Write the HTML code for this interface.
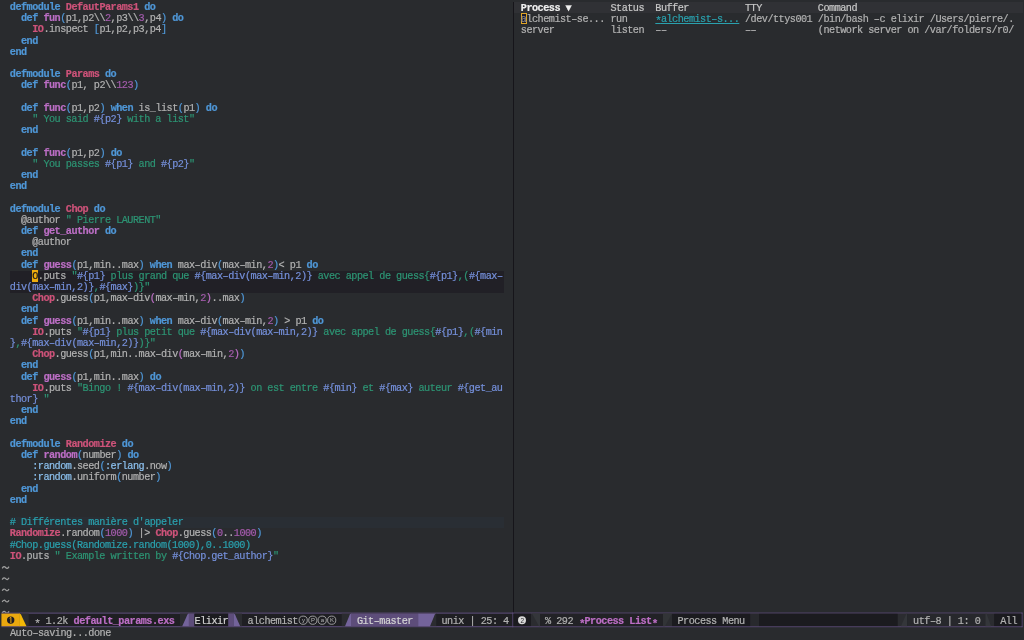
<!DOCTYPE html>
<html><head><meta charset="utf-8"><style>
*{margin:0;padding:0;box-sizing:border-box}
html,body{width:1024px;height:640px;overflow:hidden;background:#292b2e}
body{position:relative;-webkit-text-stroke:0.2px;font-family:"Liberation Mono",monospace;font-size:10.2px;letter-spacing:-0.5160px;color:#b2b2b2}
.ln,.rt,.mt,.tl{position:absolute;white-space:pre;line-height:11.2px;height:11.2px}
.ln{left:9.8px;width:494.2px}
.hl{background:#212026}
.cbg{background:#292e34}
.k{color:#4f97d7;font-weight:bold}.t{color:#ce537a;font-weight:bold}.f{color:#bc6ec5;font-weight:bold}.s{color:#2d9574}.c{color:#a45bad}.v{color:#7590db}.m{color:#2aa1ae}.a{color:#8cc0ee}.p{color:#4f97d7}.q{color:#bc6ec5}
.u{color:#1a1a1a}
.tl{left:2px;color:#9a9a9a}
.hb{color:#f0f0f0;font-weight:bold}
.hn{color:#c8c8c8}
.lnk{color:#2aa1ae;text-decoration:underline}
.mb{color:#bc6ec5;font-weight:bold}
.mw{color:#d4d4d4}
.abs{position:absolute}
.ast{position:relative;top:2.8px;font-size:11px;letter-spacing:-0.996px}
#w{position:absolute;left:0;top:0;width:1024px;height:640px;will-change:transform}
</style></head><body><div id="w">
<div class="abs" style="left:513px;top:1.9px;width:1px;height:611px;background:#16151a"></div>
<div class="abs" style="left:514px;top:2px;width:508.5px;height:10.6px;background:#303135"></div>
<div class="ln hl" style="top:270.70px"></div>
<div class="ln hl" style="top:281.90px"></div>
<div class="ln cbg" style="top:517.10px"></div>
<div class="abs" style="left:31.8px;top:269.9px;width:6.2px;height:12px;background:#eead0e"></div>
<div class="ln" style="top:1.90px"><span class="k">defmodule</span> <span class="t">DefautParams1</span> <span class="k">do</span></div>
<div class="ln" style="top:13.10px">  <span class="k">def</span> <span class="f">fun</span><span class="p">(</span>p1,p2\\<span class="c">2</span>,p3\\<span class="c">3</span>,p4<span class="p">)</span> <span class="k">do</span></div>
<div class="ln" style="top:24.30px">    <span class="t">IO</span>.inspect <span class="p">[</span>p1,p2,p3,p4<span class="p">]</span></div>
<div class="ln" style="top:35.50px">  <span class="k">end</span></div>
<div class="ln" style="top:46.70px"><span class="k">end</span></div>
<div class="ln" style="top:57.90px"></div>
<div class="ln" style="top:69.10px"><span class="k">defmodule</span> <span class="t">Params</span> <span class="k">do</span></div>
<div class="ln" style="top:80.30px">  <span class="k">def</span> <span class="f">func</span><span class="p">(</span>p1, p2\\<span class="c">123</span><span class="p">)</span></div>
<div class="ln" style="top:91.50px"></div>
<div class="ln" style="top:102.70px">  <span class="k">def</span> <span class="f">func</span><span class="p">(</span>p1,p2<span class="p">)</span> <span class="k">when</span> is_list<span class="p">(</span>p1<span class="p">)</span> <span class="k">do</span></div>
<div class="ln" style="top:113.90px">    <span class="s">&quot; You said </span><span class="v">#{p2}</span><span class="s"> with a list&quot;</span></div>
<div class="ln" style="top:125.10px">  <span class="k">end</span></div>
<div class="ln" style="top:136.30px"></div>
<div class="ln" style="top:147.50px">  <span class="k">def</span> <span class="f">func</span><span class="p">(</span>p1,p2<span class="p">)</span> <span class="k">do</span></div>
<div class="ln" style="top:158.70px">    <span class="s">&quot; You passes </span><span class="v">#{p1}</span><span class="s"> and </span><span class="v">#{p2}</span><span class="s">&quot;</span></div>
<div class="ln" style="top:169.90px">  <span class="k">end</span></div>
<div class="ln" style="top:181.10px"><span class="k">end</span></div>
<div class="ln" style="top:192.30px"></div>
<div class="ln" style="top:203.50px"><span class="k">defmodule</span> <span class="t">Chop</span> <span class="k">do</span></div>
<div class="ln" style="top:214.70px">  @author <span class="s">&quot; Pierre LAURENT&quot;</span></div>
<div class="ln" style="top:225.90px">  <span class="k">def</span> <span class="f">get_author</span> <span class="k">do</span></div>
<div class="ln" style="top:237.10px">    @author</div>
<div class="ln" style="top:248.30px">  <span class="k">end</span></div>
<div class="ln" style="top:259.50px">  <span class="k">def</span> <span class="f">guess</span><span class="p">(</span>p1,min..max<span class="p">)</span> <span class="k">when</span> max–div<span class="p">(</span>max–min,<span class="c">2</span><span class="p">)</span>&lt; p1 <span class="k">do</span></div>
<div class="ln" style="top:270.70px">    <span class="u">O</span>.puts <span class="s">&quot;</span><span class="v">#{p1}</span><span class="s"> plus grand que </span><span class="v">#{max–div(max–min,2)}</span><span class="s"> avec appel de guess{</span><span class="v">#{p1}</span><span class="s">,(</span><span class="v">#{max–</span></div>
<div class="ln" style="top:281.90px"><span class="v">div(max–min,2)}</span><span class="s">,</span><span class="v">#{max}</span><span class="s">)}&quot;</span></div>
<div class="ln" style="top:293.10px">    <span class="t">Chop</span>.guess<span class="p">(</span>p1,max–div<span class="q">(</span>max–min,<span class="c">2</span><span class="q">)</span>..max<span class="p">)</span></div>
<div class="ln" style="top:304.30px">  <span class="k">end</span></div>
<div class="ln" style="top:315.50px">  <span class="k">def</span> <span class="f">guess</span><span class="p">(</span>p1,min..max<span class="p">)</span> <span class="k">when</span> max–div<span class="p">(</span>max–min,<span class="c">2</span><span class="p">)</span> &gt; p1 <span class="k">do</span></div>
<div class="ln" style="top:326.70px">    <span class="t">IO</span>.puts <span class="s">&quot;</span><span class="v">#{p1}</span><span class="s"> plus petit que </span><span class="v">#{max–div(max–min,2)}</span><span class="s"> avec appel de guess{</span><span class="v">#{p1}</span><span class="s">,(</span><span class="v">#{min</span></div>
<div class="ln" style="top:337.90px"><span class="v">}</span><span class="s">,</span><span class="v">#{max–div(max–min,2)}</span><span class="s">)}&quot;</span></div>
<div class="ln" style="top:349.10px">    <span class="t">Chop</span>.guess<span class="p">(</span>p1,min..max–div<span class="q">(</span>max–min,<span class="c">2</span><span class="q">)</span><span class="p">)</span></div>
<div class="ln" style="top:360.30px">  <span class="k">end</span></div>
<div class="ln" style="top:371.50px">  <span class="k">def</span> <span class="f">guess</span><span class="p">(</span>p1,min..max<span class="p">)</span> <span class="k">do</span></div>
<div class="ln" style="top:382.70px">    <span class="t">IO</span>.puts <span class="s">&quot;Bingo ! </span><span class="v">#{max–div(max–min,2)}</span><span class="s"> on est entre </span><span class="v">#{min}</span><span class="s"> et </span><span class="v">#{max}</span><span class="s"> auteur </span><span class="v">#{get_au</span></div>
<div class="ln" style="top:393.90px"><span class="v">thor}</span><span class="s"> &quot;</span></div>
<div class="ln" style="top:405.10px">  <span class="k">end</span></div>
<div class="ln" style="top:416.30px"><span class="k">end</span></div>
<div class="ln" style="top:427.50px"></div>
<div class="ln" style="top:438.70px"><span class="k">defmodule</span> <span class="t">Randomize</span> <span class="k">do</span></div>
<div class="ln" style="top:449.90px">  <span class="k">def</span> <span class="f">random</span><span class="p">(</span>number<span class="p">)</span> <span class="k">do</span></div>
<div class="ln" style="top:461.10px">    <span class="a">:random</span>.seed<span class="p">(</span><span class="a">:erlang</span>.now<span class="p">)</span></div>
<div class="ln" style="top:472.30px">    <span class="a">:random</span>.uniform<span class="p">(</span>number<span class="p">)</span></div>
<div class="ln" style="top:483.50px">  <span class="k">end</span></div>
<div class="ln" style="top:494.70px"><span class="k">end</span></div>
<div class="ln" style="top:505.90px"></div>
<div class="ln" style="top:517.10px"><span class="m"># Différentes manière d&#x27;appeler</span></div>
<div class="ln" style="top:528.30px"><span class="t">Randomize</span>.random<span class="p">(</span><span class="c">1000</span><span class="p">)</span> |&gt; <span class="t">Chop</span>.guess<span class="p">(</span><span class="c">0</span>..<span class="c">1000</span><span class="p">)</span></div>
<div class="ln" style="top:539.50px"><span class="m">#Chop.guess(Randomize.random(1000),0..1000)</span></div>
<div class="ln" style="top:550.70px"><span class="t">IO</span>.puts <span class="s">&quot; Example written by </span><span class="v">#{Chop.get_author}</span><span class="s">&quot;</span></div>
<svg class="abs" style="left:0;top:0" width="20" height="613"><path d="M2.2,568.40 C3.4,566.10 4.6,566.30 5.6,567.50 S7.8,568.90 9.0,566.60" fill="none" stroke="#a0a0a0" stroke-width="1.2"/><path d="M2.2,579.60 C3.4,577.30 4.6,577.50 5.6,578.70 S7.8,580.10 9.0,577.80" fill="none" stroke="#a0a0a0" stroke-width="1.2"/><path d="M2.2,590.80 C3.4,588.50 4.6,588.70 5.6,589.90 S7.8,591.30 9.0,589.00" fill="none" stroke="#a0a0a0" stroke-width="1.2"/><path d="M2.2,602.00 C3.4,599.70 4.6,599.90 5.6,601.10 S7.8,602.50 9.0,600.20" fill="none" stroke="#a0a0a0" stroke-width="1.2"/><path d="M2.2,613.20 C3.4,610.90 4.6,611.10 5.6,612.30 S7.8,613.70 9.0,611.40" fill="none" stroke="#a0a0a0" stroke-width="1.2"/></svg>
<div class="abs" style="left:520.6px;top:12.9px;width:6.1px;height:11px;border:1px solid #e0a526;background:#1b1b2a"></div>
<div class="rt hb" style="left:520.80px;top:2.70px">Process ▼</div>
<div class="rt hn" style="left:610.48px;top:2.70px">Status</div>
<div class="rt hn" style="left:655.32px;top:2.70px">Buffer</div>
<div class="rt hn" style="left:745.00px;top:2.70px">TTY</div>
<div class="rt hn" style="left:817.87px;top:2.70px">Command</div>
<div class="rt " style="left:520.80px;top:13.70px"><span style="color:#85858c">a</span>lchemist–se...</div>
<div class="rt " style="left:610.48px;top:13.70px">run</div>
<div class="rt lnk" style="left:655.32px;top:13.70px"><span class="ast">*</span>alchemist–s...</div>
<div class="rt " style="left:745.00px;top:13.70px">/dev/ttys001</div>
<div class="rt " style="left:817.87px;top:13.70px">/bin/bash –c elixir /Users/pierre/.</div>
<div class="rt " style="left:520.80px;top:24.60px">server</div>
<div class="rt " style="left:610.48px;top:24.60px">listen</div>
<div class="rt " style="left:655.32px;top:24.60px">––</div>
<div class="rt " style="left:745.00px;top:24.60px">––</div>
<div class="rt " style="left:817.87px;top:24.60px">(network server on /var/folders/r0/</div>
<svg class="abs" style="left:0;top:0" width="1024" height="640" viewBox="0 0 1024 640" font-family="Liberation Sans" style="-webkit-text-stroke:0"><rect x="1.40" y="613.60" width="511.00" height="12.60" fill="#1f1f23"/><rect x="1.40" y="612.60" width="511.50" height="1.00" fill="#5d4d7a"/><rect x="1.40" y="626.20" width="511.50" height="1.00" fill="#5d4d7a"/><rect x="19.60" y="613.60" width="9.10" height="12.60" fill="#2b2c30"/><path d="M19.20,613.60 L19.60,613.60 Q21.12,613.90 22.22,617.20 L26.50,626.20 L19.20,626.20 Z" fill="#f2b806"/><rect x="1.40" y="613.60" width="18.20" height="12.60" fill="#eaa80f"/><circle cx="10.7" cy="620.1" r="3.7" fill="#1d1b24"/><path d="M9.6,618.2 L10.9,617.3 L10.9,623.0" fill="none" stroke="#eaa80f" stroke-width="1"/><circle cx="303.20" cy="620.2" r="4.1" fill="none" stroke="#b8b8b8" stroke-width="0.8"/><text x="303.20" y="622.4" font-size="6" fill="#b8b8b8" text-anchor="middle">y</text><circle cx="312.80" cy="620.2" r="4.1" fill="none" stroke="#b8b8b8" stroke-width="0.8"/><text x="312.80" y="622.4" font-size="6" fill="#b8b8b8" text-anchor="middle">P</text><circle cx="322.20" cy="620.2" r="4.1" fill="none" stroke="#b8b8b8" stroke-width="0.8"/><text x="322.20" y="622.4" font-size="6" fill="#b8b8b8" text-anchor="middle">a</text><circle cx="331.70" cy="620.2" r="4.1" fill="none" stroke="#b8b8b8" stroke-width="0.8"/><text x="331.70" y="622.4" font-size="6" fill="#b8b8b8" text-anchor="middle">K</text><rect x="180.00" y="613.60" width="8.75" height="12.60" fill="#2b2c30"/><path d="M189.00,613.60 L188.75,613.60 Q187.31,613.90 186.26,617.20 L182.20,626.20 L189.00,626.20 Z" fill="#73639a"/><rect x="188.75" y="613.60" width="5.75" height="12.60" fill="#5d4d7a"/><rect x="194.50" y="613.60" width="33.70" height="12.60" fill="#1b1b1f"/><rect x="228.20" y="613.60" width="5.55" height="12.60" fill="#5d4d7a"/><rect x="233.75" y="613.60" width="8.25" height="12.60" fill="#2b2c30"/><path d="M233.50,613.60 L233.75,613.60 Q235.17,613.90 236.20,617.20 L240.20,626.20 L233.50,626.20 Z" fill="#73639a"/><rect x="341.70" y="613.60" width="9.30" height="12.60" fill="#2b2c30"/><path d="M351.30,613.60 L351.00,613.60 Q349.68,613.90 348.72,617.20 L345.00,626.20 L351.30,626.20 Z" fill="#73639a"/><rect x="351.00" y="613.60" width="67.10" height="12.60" fill="#5d4d7a"/><rect x="418.10" y="613.60" width="17.90" height="12.60" fill="#73639a"/><path d="M436.30,613.60 L436.00,613.60 Q434.68,613.90 433.72,617.20 L430.00,626.20 L436.30,626.20 Z" fill="#2b2c30"/><rect x="512.40" y="613.60" width="510.10" height="12.60" fill="#1f1f23"/><rect x="512.40" y="612.60" width="510.10" height="1.00" fill="#5d4d7a"/><rect x="512.40" y="626.20" width="510.10" height="1.00" fill="#5d4d7a"/><rect x="512.40" y="612.60" width="1.00" height="14.60" fill="#5d4d7a"/><rect x="1021.50" y="612.60" width="1.00" height="14.60" fill="#5d4d7a"/><rect x="513.40" y="613.60" width="17.60" height="12.60" fill="#1b1b1f"/><circle cx="522" cy="620.3" r="4.0" fill="#d8d8d8"/><text x="522" y="622.7" font-size="6.5" fill="#2a2a2e" text-anchor="middle">2</text><rect x="531.00" y="613.60" width="9.00" height="12.60" fill="#2b2c30"/><path d="M532,613.6 L540,613.6 L540,626.2 L539,626.2 Z" fill="#34363a"/><rect x="540.00" y="613.60" width="123.00" height="12.60" fill="#222226"/><rect x="663.00" y="613.60" width="9.00" height="12.60" fill="#2b2c30"/><path d="M663,613.6 L672,613.6 L665,626.2 L663,626.2 Z" fill="#323437"/><rect x="672.00" y="613.60" width="78.20" height="12.60" fill="#1b1b1f"/><rect x="750.20" y="613.60" width="9.00" height="12.60" fill="#28292d"/><rect x="759.20" y="613.60" width="138.50" height="12.60" fill="#1b1b1f"/><rect x="897.70" y="613.60" width="9.50" height="12.60" fill="#2b2c30"/><path d="M901,626.2 L906.5,613.6 L907.2,613.6 L907.2,626.2 Z" fill="#34363a"/><rect x="907.20" y="613.60" width="78.30" height="12.60" fill="#27282c"/><rect x="985.50" y="613.60" width="8.80" height="12.60" fill="#2b2c30"/><path d="M985.5,613.6 L986.5,613.6 L991,626.2 L985.5,626.2 Z" fill="#34363a"/><rect x="994.30" y="613.60" width="27.20" height="12.60" fill="#1b1b1f"/></svg>
<div class="mt " style="left:34.30px;top:615.80px"><span class="ast">*</span> 1.2k</div>
<div class="mt mb" style="left:73.60px;top:615.80px">default_params.exs</div>
<div class="mt mw" style="left:194.60px;top:615.80px">Elixir</div>
<div class="mt " style="left:247.60px;top:615.80px">alchemist</div>
<div class="mt mw" style="left:356.90px;top:615.80px">Git–master</div>
<div class="mt " style="left:441.50px;top:615.80px">unix | 25: 4</div>
<div class="mt " style="left:545.00px;top:615.80px">% 292</div>
<div class="mt mb" style="left:578.90px;top:615.80px"><span class="ast">*</span>Process List<span class="ast">*</span></div>
<div class="mt " style="left:677.50px;top:615.80px">Process Menu</div>
<div class="mt " style="left:913.10px;top:615.80px">utf–8 | 1: 0</div>
<div class="mt " style="left:1000.20px;top:615.80px">All</div>
<div class="mt" style="left:10px;top:627.5px">Auto–saving...done</div>
</div></body></html>
